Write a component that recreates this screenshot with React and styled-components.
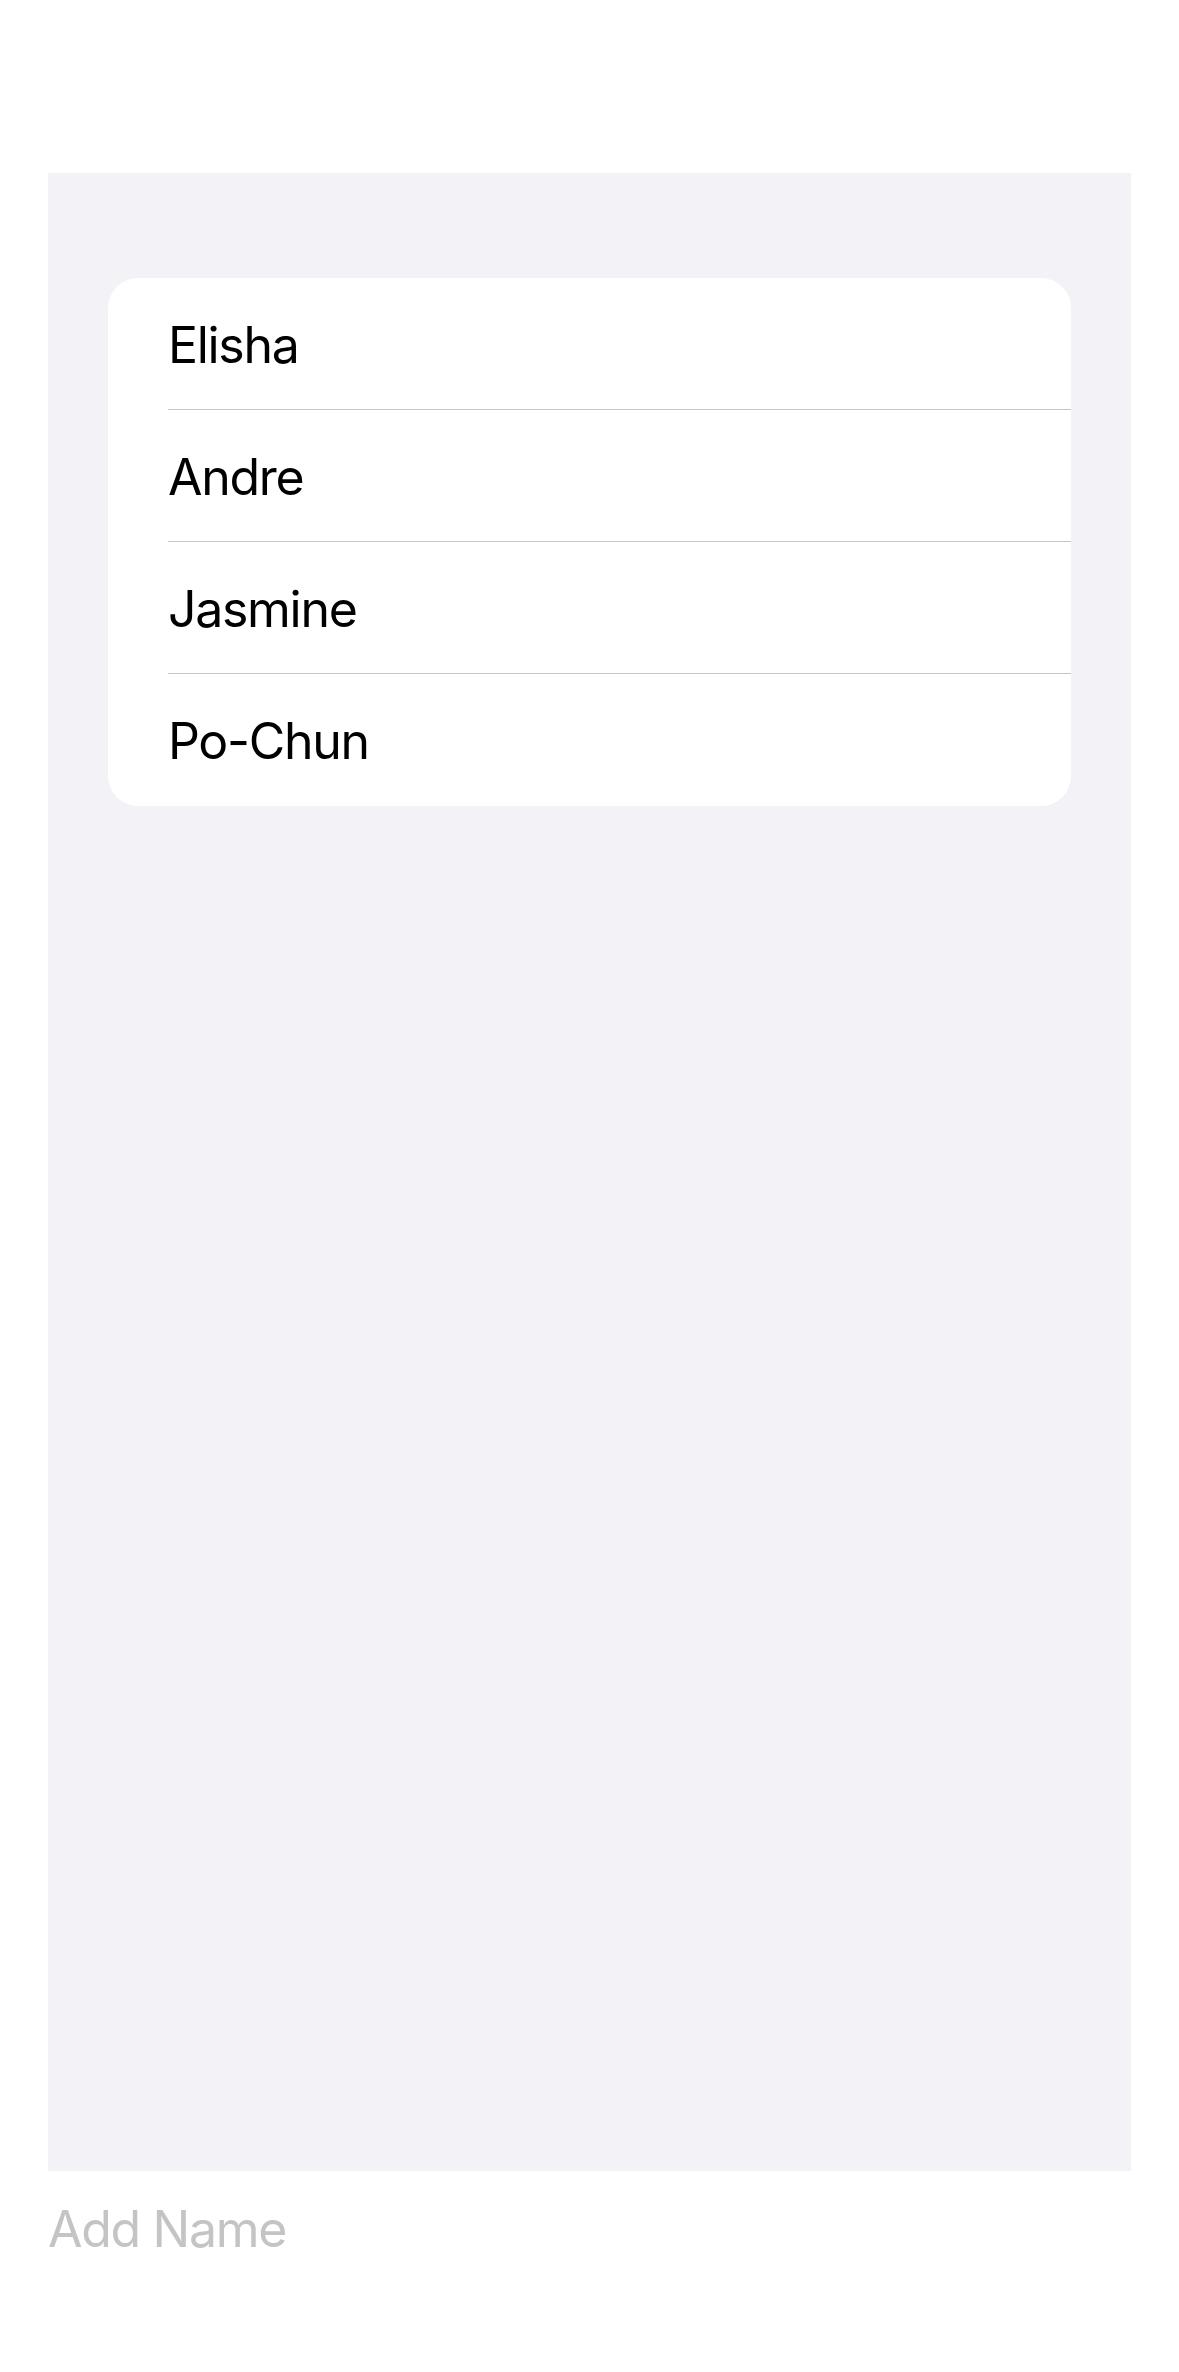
import React from "react";
import styled, { createGlobalStyle } from "styled-components";

const names = ["Elisha", "Andre", "Jasmine", "Po-Chun"];

const App = () => {
  return (
    <>
      <GlobalStyle />
      <Screen>
        <ListPanel>
          <Card>
            {names.map((name, index) => (
              <Row key={name}>
                <RowInner last={index === names.length - 1}>
                  <Name>{name}</Name>
                </RowInner>
              </Row>
            ))}
          </Card>
        </ListPanel>
        <AddField>Add Name</AddField>
      </Screen>
    </>
  );
};

export default App;

// css
const GlobalStyle = createGlobalStyle`
  html, body {
    margin: 0;
    padding: 0;
    background: #ffffff;
  }
  body {
    font-family: "Inter", "Noto Sans", "Liberation Sans", sans-serif;
    -webkit-font-smoothing: antialiased;
  }
`;

const Screen = styled.div`
  min-height: 2372px;
  box-sizing: border-box;
  padding: 173px 48px 0 48px;
  display: flex;
  flex-direction: column;
  background: #ffffff;
`;

const ListPanel = styled.div`
  height: 1998px;
  box-sizing: border-box;
  background-color: #f2f2f7;
  padding: 105px 60px 0 60px;
`;

const Card = styled.div`
  background-color: #ffffff;
  border-radius: 30px;
  overflow: hidden;
  display: flex;
  flex-direction: column;
`;

const Row = styled.div`
  padding-left: 60px;
`;

const RowInner = styled.div`
  height: 132px;
  box-sizing: border-box;
  display: flex;
  align-items: center;
  padding-top: 2px;
  border-bottom: ${(p) => (p.last ? "none" : "1px solid #c6c6c8")};
`;

const Name = styled.span`
  font-size: 50px;
  line-height: normal;
  letter-spacing: -1.3px;
  color: #000000;
`;

const AddField = styled.div`
  margin-top: 28px;
  font-size: 50px;
  line-height: 1.2;
  letter-spacing: -1.3px;
  color: #c4c4c6;
`;
